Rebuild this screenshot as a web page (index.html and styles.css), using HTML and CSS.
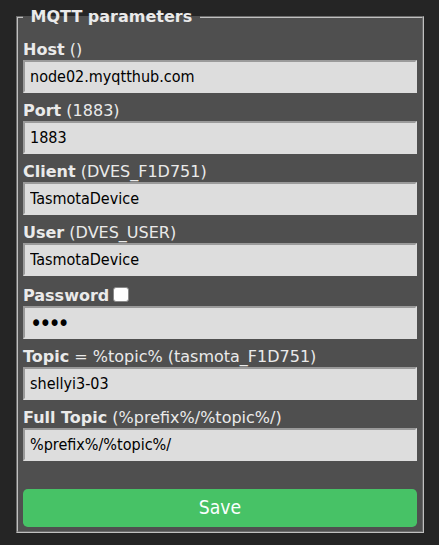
FILE: index.html
```html
<!DOCTYPE html>
<html>
<head>
<meta charset="utf-8">
<link rel="stylesheet" href="styles.css">
</head>
<body>
<div class="wrap">
<fieldset class="box">
<legend class="legend"><b>&nbsp;MQTT parameters&nbsp;</b></legend>
<form class="form">
<p class="row"><b>Host</b> ()<br><input class="field" value="node02.myqtthub.com"></p>
<p class="row"><b>Port</b> (1883)<br><input class="field" value="1883"></p>
<p class="row"><b>Client</b> (DVES_F1D751)<br><input class="field" value="TasmotaDevice"></p>
<p class="row"><b>User</b> (DVES_USER)<br><input class="field" value="TasmotaDevice"></p>
<p class="row"><b>Password</b><input type="checkbox" class="check"><br><input class="field pass" type="password" value="1234"></p>
<p class="row"><b>Topic</b> = %topic% (tasmota_F1D751)<br><input class="field" value="shellyi3-03"></p>
<p class="row"><b>Full Topic</b> (%prefix%/%topic%/)<br><input class="field" value="%prefix%/%topic%/"></p>
<br>
<button type="button" class="save">Save</button>
</form>
</fieldset>
</div>
</body>
</html>
```

FILE: styles.css
```css
html, body {
  margin: 0;
  padding: 0;
  background: #252525;
}
body {
  font-family: "DejaVu Sans", Verdana, sans-serif;
  font-size: 16px;
  line-height: 20px;
  color: #eaeaea;
}
.wrap {
  padding: 7px 15px 0 16px;
}
.box {
  margin: 0;
  background: #4f4f4f;
  border: 2px groove rgb(192, 192, 192);
  padding: 5px 5px 4px 5px;
}
.legend {
  padding: 0 2px;
  color: #eaeaea;
}
.form {
  margin: 0;
}
.row {
  margin: 8px 0;
}
.field {
  display: inline-block;
  vertical-align: top;
  width: 100%;
  height: 33px;
  box-sizing: border-box;
  padding: 0 5px;
  font-family: "DejaVu Sans Condensed", "DejaVu Sans", sans-serif;
  font-size: 16px;
  line-height: 20px;
  background: #dddddd;
  color: #000000;
  border: 2px solid;
  border-color: #9a9a9a #dddddd #dddddd #9a9a9a;
  margin: 0;
}
.pass {
  font-size: 23px;
  letter-spacing: -3px;
}
.check {
  -webkit-appearance: none;
  appearance: none;
  width: 16px;
  height: 15px;
  margin: 3px 3px 3px 4px;
  vertical-align: -4px;
  background: #ffffff;
  border: 1px solid #8a8a8a;
  border-radius: 3px;
  box-sizing: border-box;
}
.save {
  display: block;
  width: 100%;
  border: 0;
  border-radius: 0.3rem;
  background: #47c266;
  color: #faffff;
  line-height: 2.4rem;
  font-size: 1.2rem;
  font-family: "DejaVu Sans Condensed", "DejaVu Sans", sans-serif;
  padding: 0;
}
```
